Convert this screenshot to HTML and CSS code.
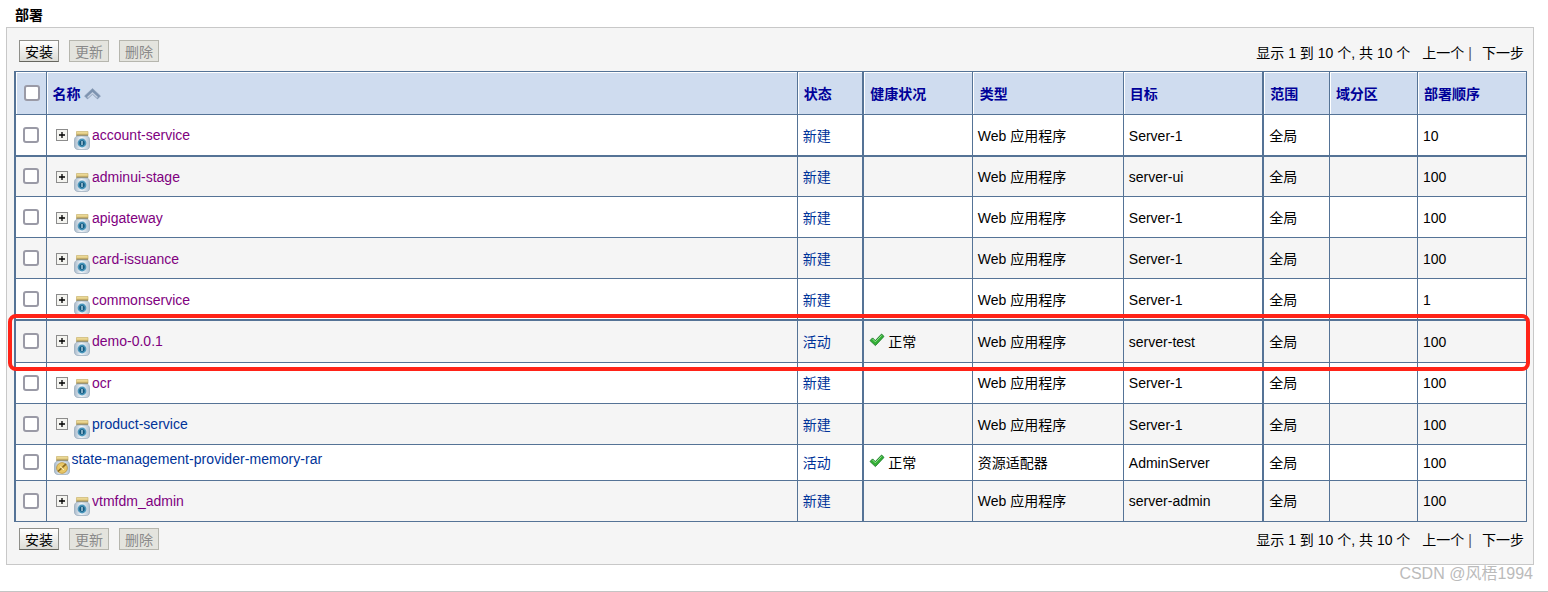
FILE: index.html
```html
<!DOCTYPE html>
<html>
<head>
    <title>部署</title>
    <meta charset="utf-8">
    <link rel="stylesheet" href="styles.css">
</head>
<body>
    <svg class="defs" width="0" height="0">
        <defs>
            <linearGradient id="glass" x1="0" y1="0" x2="1" y2="0">
                <stop offset="0" stop-color="#a8bacb"/>
                <stop offset="0.45" stop-color="#f2f6fa"/>
                <stop offset="1" stop-color="#b2c3d2"/>
            </linearGradient>
            <linearGradient id="lid" x1="0" y1="0" x2="0" y2="1">
                <stop offset="0" stop-color="#f3e2a2"/>
                <stop offset="1" stop-color="#d4ba6c"/>
            </linearGradient>
            <symbol id="jar" viewBox="0 0 16 19">
                <path d="M2.5 .5h11.5v4H2.5z" fill="url(#lid)" stroke="#c9b36e" stroke-width="0.7"/>
                <path d="M2.5 4.2h11.5" stroke="#85764a" stroke-width="1"/>
                <path d="M3 5h10.5c1.4 1 2 2.2 2 3.6v6.6c0 2-1.3 3.3-3.2 3.3H4c-2 0-3.5-1.3-3.5-3.3V8.6C.5 7.2 1.4 6 3 5z" fill="url(#glass)" stroke="#93a6b8" stroke-width="0.7"/>
                <circle cx="8" cy="12" r="4.4" fill="#4a97bc"/>
                <circle cx="8" cy="12" r="2.7" fill="#14587e"/>
                <path d="M8 10v4" stroke="#cfe8f4" stroke-width="1.2"/>
            </symbol>
            <symbol id="rar" viewBox="0 0 16 19">
                <path d="M2.5 .5h11.5v4H2.5z" fill="url(#lid)" stroke="#c9b36e" stroke-width="0.7"/>
                <path d="M2.5 4.2h11.5" stroke="#85764a" stroke-width="1"/>
                <path d="M3 5h10.5c1.4 1 2 2.2 2 3.6v6.6c0 2-1.3 3.3-3.2 3.3H4c-2 0-3.5-1.3-3.5-3.3V8.6C.5 7.2 1.4 6 3 5z" fill="url(#glass)" stroke="#93a6b8" stroke-width="0.7"/>
                <circle cx="8" cy="12" r="5.4" fill="#e9c766" stroke="#b08a30" stroke-width="0.7"/>
                <path d="M4.5 15l2.6-2.4M9 10.8l2.6-2.4" stroke="#8a6a20" stroke-width="1.7" stroke-linecap="round"/>
                <path d="M6 10.5l4 3.5" stroke="#fff3c4" stroke-width="1"/>
            </symbol>
            <symbol id="check" viewBox="0 0 16 14">
                <path d="M1 7.5l2.6-2.6 2.7 2.7L12.6 1 15 3.4 6.4 12.6z" fill="#33b035" stroke="#1d7d2a" stroke-width="0.9" stroke-linejoin="round"/>
                <path d="M3.6 6l2.7 2.8L12.6 2.4" fill="none" stroke="#9fe39a" stroke-width="0.9"/>
            </symbol>
            <symbol id="plus" viewBox="0 0 12 12">
                <rect x="0.5" y="0.5" width="11" height="11" fill="#f4f4f0" stroke="#8c8c8c"/>
                <path d="M3 6h6M6 3v6" stroke="#000" stroke-width="1.3"/>
            </symbol>
        </defs>
    </svg>

    <h1 class="title">部署</h1>
    <div class="panel">
        <div class="toolbar toolbar-top">
            <div class="buttons">
                <button class="btn">安装</button>
                <button class="btn" disabled>更新</button>
                <button class="btn" disabled>删除</button>
            </div>
            <div class="pager">
                <span>显示 1 到 10 个, 共 10 个</span>
                <span class="pager-links">上一个<i>|</i>下一步</span>
            </div>
        </div>

        <table class="grid">
            <colgroup>
                <col class="c-check"><col class="c-name"><col class="c-state"><col class="c-health">
                <col class="c-type"><col class="c-target"><col class="c-scope"><col class="c-part"><col class="c-order">
            </colgroup>
            <thead>
                <tr>
                    <th><input type="checkbox" class="check"></th>
                    <th>
                        名称
                        <svg class="sort" width="17" height="12" viewBox="0 0 17 12">
                            <path d="M.5 8L8.5.5l8 7.5-3 3-5-4.7-5 4.7z" fill="#7d93b0" stroke="#8ea0b8" stroke-width="0.6"/>
                            <path d="M3.5 9.5l5-4.6 5 4.6" fill="none" stroke="#c6d1e2" stroke-width="1.4"/>
                        </svg>
                    </th>
                    <th class="thick">状态</th>
                    <th>健康状况</th>
                    <th class="nudge">类型</th>
                    <th class="thick">目标</th>
                    <th>范围</th>
                    <th>域分区</th>
                    <th>部署顺序</th>
                </tr>
            </thead>
            <tbody>
                <tr class="thick-row">
                    <td><input type="checkbox" class="check"></td>
                    <td><div class="name"><svg class="plus"><use href="#plus"/></svg><svg class="jar"><use href="#jar"/></svg><a href="#" class="visited">account-service</a></div></td>
                    <td class="thick"><a href="#">新建</a></td><td></td><td>Web 应用程序</td><td class="thick">Server-1</td><td>全局</td><td></td><td>10</td>
                </tr>
                <tr class="low">
                    <td><input type="checkbox" class="check"></td>
                    <td><div class="name"><svg class="plus"><use href="#plus"/></svg><svg class="jar"><use href="#jar"/></svg><a href="#" class="visited">adminui-stage</a></div></td>
                    <td class="thick"><a href="#">新建</a></td><td></td><td>Web 应用程序</td><td class="thick">server-ui</td><td>全局</td><td></td><td>100</td>
                </tr>
                <tr class="low">
                    <td><input type="checkbox" class="check"></td>
                    <td><div class="name"><svg class="plus"><use href="#plus"/></svg><svg class="jar"><use href="#jar"/></svg><a href="#" class="visited">apigateway</a></div></td>
                    <td class="thick"><a href="#">新建</a></td><td></td><td>Web 应用程序</td><td class="thick">Server-1</td><td>全局</td><td></td><td>100</td>
                </tr>
                <tr class="low">
                    <td><input type="checkbox" class="check"></td>
                    <td><div class="name"><svg class="plus"><use href="#plus"/></svg><svg class="jar"><use href="#jar"/></svg><a href="#" class="visited">card-issuance</a></div></td>
                    <td class="thick"><a href="#">新建</a></td><td></td><td>Web 应用程序</td><td class="thick">Server-1</td><td>全局</td><td></td><td>100</td>
                </tr>
                <tr class="thick-row low">
                    <td><input type="checkbox" class="check"></td>
                    <td><div class="name"><svg class="plus"><use href="#plus"/></svg><svg class="jar"><use href="#jar"/></svg><a href="#" class="visited">commonservice</a></div></td>
                    <td class="thick"><a href="#">新建</a></td><td></td><td>Web 应用程序</td><td class="thick">Server-1</td><td>全局</td><td></td><td>1</td>
                </tr>
                <tr class="tall">
                    <td><input type="checkbox" class="check"></td>
                    <td><div class="name"><svg class="plus"><use href="#plus"/></svg><svg class="jar"><use href="#jar"/></svg><a href="#" class="visited">demo-0.0.1</a></div></td>
                    <td class="thick"><a href="#">活动</a></td><td><div class="health"><svg class="ok"><use href="#check"/></svg>正常</div></td><td>Web 应用程序</td><td class="thick">server-test</td><td>全局</td><td></td><td>100</td>
                </tr>
                <tr class="up">
                    <td><input type="checkbox" class="check"></td>
                    <td><div class="name"><svg class="plus"><use href="#plus"/></svg><svg class="jar"><use href="#jar"/></svg><a href="#" class="visited">ocr</a></div></td>
                    <td class="thick"><a href="#">新建</a></td><td></td><td>Web 应用程序</td><td class="thick">Server-1</td><td>全局</td><td></td><td>100</td>
                </tr>
                <tr>
                    <td><input type="checkbox" class="check"></td>
                    <td><div class="name"><svg class="plus"><use href="#plus"/></svg><svg class="jar"><use href="#jar"/></svg><a href="#">product-service</a></div></td>
                    <td class="thick"><a href="#">新建</a></td><td></td><td>Web 应用程序</td><td class="thick">Server-1</td><td>全局</td><td></td><td>100</td>
                </tr>
                <tr class="short up">
                    <td><input type="checkbox" class="check"></td>
                    <td><div class="name name-rar"><svg class="jar"><use href="#rar"/></svg><a href="#">state-management-provider-memory-rar</a></div></td>
                    <td class="thick"><a href="#">活动</a></td><td><div class="health"><svg class="ok"><use href="#check"/></svg>正常</div></td><td>资源适配器</td><td class="thick">AdminServer</td><td>全局</td><td></td><td>100</td>
                </tr>
                <tr class="up">
                    <td><input type="checkbox" class="check"></td>
                    <td><div class="name"><svg class="plus"><use href="#plus"/></svg><svg class="jar"><use href="#jar"/></svg><a href="#" class="visited">vtmfdm_admin</a></div></td>
                    <td class="thick"><a href="#">新建</a></td><td></td><td>Web 应用程序</td><td class="thick">server-admin</td><td>全局</td><td></td><td>100</td>
                </tr>
            </tbody>
        </table>

        <div class="toolbar toolbar-bottom">
            <div class="buttons">
                <button class="btn">安装</button>
                <button class="btn" disabled>更新</button>
                <button class="btn" disabled>删除</button>
            </div>
            <div class="pager">
                <span>显示 1 到 10 个, 共 10 个</span>
                <span class="pager-links">上一个<i>|</i>下一步</span>
            </div>
        </div>
    </div>

    <div class="highlight"></div>
    <div class="watermark">CSDN @风梧1994</div>
</body>
</html>
```
FILE: styles.css
```css
:root {
    --line-color: #557396;
    --head-color: #cfdcef;
    --row-color: #f5f5f5;
}

* {
    box-sizing: border-box;
}

html, body {
    margin: 0;
    height: 592px;
    overflow: hidden;
}

body {
    position: relative;
    background-color: #fff;
    border-bottom: 1px solid #c4c4c4;
    font-family: "Liberation Sans", "Noto Sans CJK SC", sans-serif;
    font-size: 14px;
    color: #000;
    padding: 0 14px 0 6px;
}

.defs {
    position: absolute;
}

.title {
    margin: 0;
    height: 27px;
    padding: 7px 0 0 9px;
    font-size: 14px;
    line-height: 16px;
    font-weight: bold;
}

.panel {
    width: 1528px;
    height: 538px;
    background-color: #f5f5f5;
    border: 1px solid #c8c8c8;
    padding: 0 6px 0 7px;
}

.toolbar {
    display: flex;
    justify-content: space-between;
    align-items: center;
    height: 43px;
    padding: 0 3px 0 5px;
}

.toolbar-top {
    padding-top: 2px;
}

.toolbar-top .pager {
    margin-top: 4px;
}

.toolbar-bottom {
    height: 34px;
}

.toolbar-bottom .pager {
    margin-top: 2px;
}

.buttons {
    display: flex;
    gap: 10px;
}

.btn {
    width: 40px;
    height: 22px;
    padding: 0;
    font-family: inherit;
    font-size: 14px;
    color: #000;
    border: 1px solid #8f8f8a;
    border-bottom-color: #66665f;
    background: linear-gradient(#fff, #dcdcd6);
}

.btn:disabled {
    color: #8a8a8a;
    border-color: #b6b6ae;
    background: #e4e4de;
}

.pager {
    display: flex;
    gap: 12px;
    line-height: 18px;
}

.pager-links i {
    font-style: normal;
    color: #555;
    margin: 0 10px 0 4px;
}

.grid {
    width: 1513px;
    table-layout: fixed;
    border-collapse: collapse;
    border: 2px solid var(--line-color);
    border-top-width: 1px;
    border-bottom-width: 1px;
    border-right-width: 1px;
}

.c-check { width: 31px; }
.c-name { width: 751px; }
.c-state { width: 66px; }
.c-health { width: 109px; }
.c-type { width: 151px; }
.c-target { width: 140px; }
.c-scope { width: 66px; }
.c-part { width: 88px; }
.c-order { width: 109px; }

th, td {
    border: 1px solid var(--line-color);
    text-align: left;
    padding: 2px 5px 0;
    font-weight: normal;
    line-height: 18px;
}

th.thick, td.thick {
    border-right-width: 2px;
}

thead tr {
    height: 43px;
}

th {
    padding-left: 6px;
    color: #000099;
    font-weight: bold;
    background-color: var(--head-color);
    box-shadow: inset 1px 1px 0 #fff;
}

th.nudge {
    padding-left: 7px;
}

tbody tr {
    height: 41px;
}

tbody tr.tall {
    height: 43px;
}

tbody tr.short {
    height: 36px;
}

tbody tr:nth-child(even) {
    background-color: var(--row-color);
}

tbody tr:nth-child(odd) {
    background-color: #fff;
}

.thick-row td {
    border-bottom-width: 2px;
}

/* 这几行的文字比相邻行高 1px */
.up td:nth-child(n+3) {
    padding-top: 0;
}

.check {
    appearance: none;
    display: block;
    width: 16px;
    height: 16px;
    margin: 0 0 2px 2px;
    background-color: #fff;
    border: 2px solid #9a9aa6;
    border-radius: 3px;
}

.short .check {
    margin-bottom: 4px;
}

.sort {
    vertical-align: -1px;
}

.name {
    display: flex;
    align-items: flex-start;
    height: 34px;
}

.low .name {
    padding-top: 1px;
}

.name a {
    margin-top: 7px;
    margin-left: 2.5px;
}

.name-rar {
    height: 30px;
    padding-left: 2px;
}

.name-rar a {
    margin-top: 1px;
    margin-left: 2px;
    letter-spacing: 0.05px;
}

.plus {
    width: 12px;
    height: 12px;
    margin: 10px 6px 0 4px;
}

.jar {
    width: 16px;
    height: 19px;
    margin-top: 12px;
}

.name-rar .jar {
    margin-top: 7px;
}

a {
    color: #003399;
    text-decoration: none;
}

a.visited {
    color: #800080;
}

.health {
    display: flex;
    align-items: center;
    gap: 3px;
}

.ok {
    width: 16px;
    height: 14px;
    margin-top: -4px;
}

.highlight {
    position: absolute;
    left: 8px;
    top: 314px;
    width: 1522px;
    height: 57px;
    border: 4px solid #ff2318;
    border-radius: 8px;
}

.watermark {
    position: absolute;
    right: 15px;
    top: 565px;
    font-size: 16px;
    line-height: 18px;
    color: #bbb;
}
```
